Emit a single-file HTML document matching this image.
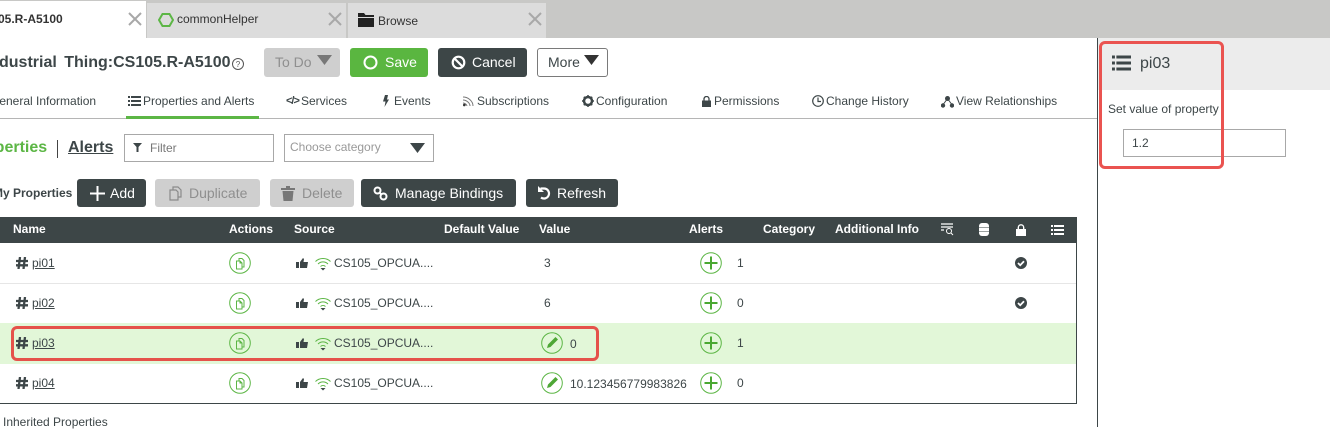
<!DOCTYPE html>
<html><head><meta charset="utf-8"><style>
html,body{margin:0;padding:0;background:#fff}
body{width:1330px;height:427px;overflow:hidden;position:relative;font-family:"Liberation Sans",sans-serif;color:#3d4648;font-size:12px}
.a,.t,.b,svg{position:absolute}
.t{white-space:nowrap;line-height:16px}
.b{border-radius:3px;box-sizing:border-box}
.d{background:#3d4647}.g{background:#cfcfcf}
.w{color:#fff}.m{color:#8f8f8f}
.h{font-weight:bold;color:#fff;top:221px}
u{text-underline-offset:1px}
</style></head><body>
<svg width="0" height="0" style="position:absolute"><defs>
<g id="copy"><circle cx="11" cy="11" r="10.3" fill="none" stroke="#5cb645" stroke-width="1"/><path d="M7.500 9h3.500l2 2v6H7.500zM11 9v2h2M10 9V6.500h3l2 2v6.500h-2" fill="none" stroke="#5cb645" stroke-width="1"/></g>
<g id="plus"><circle cx="11" cy="11" r="10.3" fill="none" stroke="#5cb645" stroke-width="1"/><path d="M4.500 11h13M11 4.500v13" stroke="#4aa832" stroke-width="2"/></g>
<g id="pen"><circle cx="11" cy="11" r="10.3" fill="none" stroke="#5cb645" stroke-width="1"/><path d="M6 16l1-3.500 7.500-7.500 2.500 2.500-7.500 7.500z" fill="#4ea736"/></g>
<g id="thumb"><path d="M0 4h3v6H0zM4 4l3-4 1 1-.5 3H12l-1 6H4z" fill="#3d4648"/></g>
<g id="wifi"><path d="M.5 4.500C4.500.5 11.500.5 15.500 4.500M3 7c3-2.800 7-2.800 10 0M5.500 9.500c1.500-1.300 3.500-1.300 5 0" fill="none" stroke="#5cb645" stroke-width="1"/><path d="M5.500 11h5L8 13.500z" fill="#3d4648"/></g>
<g id="hash"><path d="M4 0L2.500 12M9 0L7.500 12M0 4h12M0 8.300h12" stroke="#3d4648" stroke-width="2.300" fill="none"/></g>
<g id="chk"><circle cx="6" cy="6" r="6" fill="#3d4648"/><path d="M3 6l2.200 2.200L9 4.200" stroke="#fff" stroke-width="1.800" fill="none"/></g>
<g id="list"><path d="M0 1h2v2H0zM0 5h2v2H0zM0 9h2v2H0zM3 1h10v2H3zM3 5h10v2H3zM3 9h10v2H3z"/></g>
<g id="x"><path d="M1 1l12 12M13 1L1 13" stroke="#a8a8a8" stroke-width="2" fill="none"/></g>
</defs></svg>

<!-- tab strip -->
<div class="a" style="left:0;top:0;width:1330px;height:38px;background:#c8c8c6"></div>
<div class="a" style="left:0;top:1px;width:146px;height:37px;background:#fff"></div>
<div class="a" style="left:147px;top:3px;width:199px;height:35px;background:#dcdcdc"></div>
<div class="a" style="left:348px;top:3px;width:198px;height:35px;background:#dcdcdc"></div>
<div class="t" style="left:-2px;top:11px;color:#333;font-weight:bold">05.R-A5100</div>
<svg style="left:128px;top:12px" width="14" height="14"><use href="#x"/></svg>
<svg style="left:158px;top:12px" width="16" height="16"><path d="M4.500 2h7L15 8l-3.500 6h-7L1 8z" fill="none" stroke="#5cb645" stroke-width="2"/></svg>
<div class="t" style="left:177px;top:11px;color:#333">commonHelper</div>
<svg style="left:328px;top:12px" width="14" height="14"><use href="#x"/></svg>
<svg style="left:358px;top:13px" width="16" height="14"><path d="M0 0h6l1.500 2H16v2H0zM0 5h16v9H0z" fill="#222"/></svg>
<div class="t" style="left:378px;top:13px;color:#333">Browse</div>
<svg style="left:528px;top:12px" width="14" height="14"><use href="#x"/></svg>

<!-- title row -->
<div class="t" style="left:-1px;top:54px;font-size:16px;line-height:18px;font-weight:bold;color:#3d4648;word-spacing:3px">dustrial Thing:CS105.R-A5100</div>
<svg style="left:232px;top:58px" width="12" height="12"><circle cx="6" cy="6" r="5.500" fill="none" stroke="#555"/><text x="6" y="9" font-size="8" text-anchor="middle" fill="#555" font-family="Liberation Sans">?</text></svg>
<div class="b g" style="left:264px;top:48px;width:76px;height:29px"></div>
<div class="t m" style="left:275px;top:54px;font-size:14px">To Do</div>
<svg style="left:317px;top:55px" width="16" height="11"><path d="M0 0h15L7.500 10z" fill="#777"/></svg>
<div class="b" style="left:350px;top:48px;width:78px;height:29px;background:#5ab640"></div>
<svg style="left:363px;top:55px" width="15" height="15"><circle cx="7.500" cy="7.500" r="6" fill="none" stroke="#fff" stroke-width="2"/></svg>
<div class="t w" style="left:385px;top:54px;font-size:14px">Save</div>
<div class="b d" style="left:438px;top:48px;width:89px;height:29px"></div>
<svg style="left:451px;top:55px" width="15" height="15"><circle cx="7.500" cy="7.500" r="5.800" fill="none" stroke="#fff" stroke-width="2.200"/><path d="M3.500 3.500l8 8" stroke="#fff" stroke-width="2.200"/></svg>
<div class="t w" style="left:472px;top:54px;font-size:14px">Cancel</div>
<div class="b" style="left:537px;top:48px;width:71px;height:29px;border:1px solid #7a7a7a"></div>
<div class="t" style="left:548px;top:54px;font-size:14px">More</div>
<svg style="left:584px;top:55px" width="16" height="11"><path d="M0 0h15L7.500 10z" fill="#333"/></svg>

<!-- nav -->
<div class="a" style="left:0;top:118px;width:1097px;height:1px;background:#b5b5b5"></div>
<div class="a" style="left:126px;top:116px;width:133px;height:3px;background:#5cb645"></div>
<div class="t" style="left:-10px;top:93px">General Information</div>
<svg style="left:128px;top:95px" width="13" height="12" fill="#3d4648"><use href="#list"/></svg>
<div class="t" style="left:143px;top:93px">Properties and Alerts</div>
<div class="t" style="left:286px;top:93px;font-size:11px;font-weight:bold;letter-spacing:-1px">&lt;/&gt;</div>
<div class="t" style="left:301px;top:93px">Services</div>
<svg style="left:382px;top:95px" width="7" height="13"><path d="M3 0h3L5 4.500h2L2.500 12 3.500 6.500H1z" fill="#3d4648"/></svg>
<div class="t" style="left:394px;top:93px">Events</div>
<svg style="left:463px;top:94px" width="12" height="13"><path d="M0 3c5 0 10 4 10 9M0 6c3.500 0 7 3 7 6M0 9c1.500 0 4 1.500 4 3" fill="none" stroke="#777"/><circle cx="1.300" cy="11" r="1.300" fill="#333"/></svg>
<div class="t" style="left:477px;top:93px">Subscriptions</div>
<svg style="left:582px;top:95px" width="12" height="12"><circle cx="6" cy="6" r="4" fill="none" stroke="#3d4648" stroke-width="2.500"/><path d="M6 0v2M6 10v2M0 6h2M10 6h2M1.800 1.800l1.400 1.400M8.800 8.800l1.400 1.400M10.200 1.800L8.800 3.200M3.200 8.800l-1.400 1.400" stroke="#3d4648" stroke-width="1.500"/></svg>
<div class="t" style="left:596px;top:93px">Configuration</div>
<svg style="left:702px;top:96px" width="9" height="11"><path d="M0 4.500h9V11H0z" fill="#3d4648"/><path d="M2 4.500V3a2.500 2.500 0 0 1 5 0v1.500" fill="none" stroke="#3d4648" stroke-width="1.300"/></svg>
<div class="t" style="left:714px;top:93px">Permissions</div>
<svg style="left:812px;top:95px" width="12" height="12"><circle cx="6" cy="6" r="5.300" fill="none" stroke="#3d4648" stroke-width="1.200"/><path d="M6 2.500V6.500H9" fill="none" stroke="#3d4648" stroke-width="1.200"/></svg>
<div class="t" style="left:826px;top:93px">Change History</div>
<svg style="left:941px;top:96px" width="13" height="12"><circle cx="6.500" cy="2.500" r="2.500" fill="#3d4648"/><circle cx="2" cy="9.500" r="2.200" fill="#3d4648"/><circle cx="11" cy="9.500" r="2.200" fill="#3d4648"/><path d="M5.500 4L2.500 8M7.500 4l3 4" stroke="#3d4648"/></svg>
<div class="t" style="left:956px;top:93px">View Relationships</div>

<!-- filter row -->
<div class="t" style="left:-32px;top:138px;font-size:16px;line-height:19px;font-weight:bold;color:#5cb645">Properties</div>
<div class="a" style="left:57px;top:140px;width:1px;height:18px;background:#444"></div>
<div class="t" style="left:68px;top:138px;font-size:16px;line-height:19px;font-weight:bold"><u>Alerts</u></div>
<div class="b" style="left:124px;top:134px;width:150px;height:28px;border:1px solid #a8a8a8;border-radius:0"></div>
<svg style="left:133px;top:143px" width="9" height="9"><path d="M0 0h9L5.500 4v5H3.500V4z" fill="#3d4648"/></svg>
<div class="t" style="left:150px;top:140px;color:#777">Filter</div>
<div class="b" style="left:284px;top:134px;width:150px;height:28px;border:1px solid #a8a8a8;border-radius:0"></div>
<div class="t" style="left:290px;top:139px;color:#999">Choose category</div>
<svg style="left:410px;top:143px" width="16" height="11"><path d="M0 0h15L7.500 10z" fill="#3d4648"/></svg>

<!-- toolbar -->
<div class="t" style="left:-7px;top:185px;font-weight:bold">My Properties</div>
<div class="b d" style="left:77px;top:179px;width:69px;height:28px"></div>
<svg style="left:90px;top:186px" width="15" height="15"><path d="M0 7.500h15M7.500 0v15" stroke="#fff" stroke-width="2"/></svg>
<div class="t w" style="left:110px;top:185px;font-size:14px">Add</div>
<div class="b g" style="left:155px;top:179px;width:105px;height:28px"></div>
<svg style="left:169px;top:186px" width="13" height="15"><path d="M1 4h6l2 2v8H1zM4 4V1h5l3 3v7H9" fill="none" stroke="#8a8a8a" stroke-width="1.200"/></svg>
<div class="t m" style="left:189px;top:185px;font-size:14px">Duplicate</div>
<div class="b g" style="left:270px;top:179px;width:84px;height:28px"></div>
<svg style="left:281px;top:186px" width="14" height="15"><path d="M0 2h14v2H0zM5 0h4v2H5zM1.500 5h11l-1 10h-9z" fill="#777"/></svg>
<div class="t m" style="left:302px;top:185px;font-size:14px">Delete</div>
<div class="b d" style="left:361px;top:179px;width:155px;height:28px"></div>
<svg style="left:373px;top:186px" width="15" height="15"><circle cx="4.500" cy="4.500" r="3" fill="none" stroke="#fff" stroke-width="2"/><circle cx="10.500" cy="10.500" r="3" fill="none" stroke="#fff" stroke-width="2"/><path d="M6 6l3 3" stroke="#fff" stroke-width="2"/></svg>
<div class="t w" style="left:395px;top:185px;font-size:14px">Manage Bindings</div>
<div class="b d" style="left:526px;top:179px;width:92px;height:28px"></div>
<svg style="left:537px;top:186px" width="15" height="15"><path d="M3.500 2.500H7a5 5 0 1 1-3 9" fill="none" stroke="#fff" stroke-width="2.200"/><path d="M1 0v6h6z" fill="#fff"/></svg>
<div class="t w" style="left:557px;top:185px;font-size:14px">Refresh</div>

<!-- table -->
<div class="a d" style="left:0;top:217px;width:1077px;height:26px"></div>
<div class="t h" style="left:13px">Name</div>
<div class="t h" style="left:229px">Actions</div>
<div class="t h" style="left:294px">Source</div>
<div class="t h" style="left:444px">Default Value</div>
<div class="t h" style="left:539px">Value</div>
<div class="t h" style="left:689px">Alerts</div>
<div class="t h" style="left:763px">Category</div>
<div class="t h" style="left:835px">Additional Info</div>
<svg style="left:941px;top:223px" width="13" height="13"><path d="M0 1h12M0 4h12M0 7h3" stroke="#fff" stroke-width="1.200"/><circle cx="8" cy="8" r="2.500" fill="none" stroke="#fff"/><path d="M10 10l2 2" stroke="#fff"/></svg>
<svg style="left:979px;top:223px" width="10" height="13"><rect width="10" height="13" rx="3" fill="#fff"/><path d="M0 4.500h10M0 8.500h10" stroke="#9aa0a0"/></svg>
<svg style="left:1016px;top:224px" width="10" height="12"><path d="M0 5h10v7H0z" fill="#fff"/><path d="M2.300 5V3.500a2.700 2.700 0 0 1 5.400 0V5" fill="none" stroke="#fff" stroke-width="1.400"/></svg>
<svg style="left:1051px;top:224px" width="13" height="12" fill="#fff"><use href="#list"/></svg>

<div class="a" style="left:0;top:283px;width:1077px;height:1px;background:#e6e6e6"></div>
<div class="a" style="left:0;top:323px;width:1077px;height:41px;background:#e2f7d8"></div>
<div class="a" style="left:0;top:403px;width:1077px;height:1px;background:#3d4648"></div>
<div class="a" style="left:1076px;top:243px;width:1px;height:161px;background:#3d4648"></div>

<!-- row 1 -->
<svg style="left:16px;top:257px" width="12" height="12"><use href="#hash"/></svg>
<div class="t" style="left:32px;top:255px"><u>pi01</u></div>
<svg style="left:229px;top:252px" width="22" height="22"><use href="#copy"/></svg>
<svg style="left:296px;top:258px" width="12" height="10"><use href="#thumb"/></svg>
<svg style="left:315px;top:257px" width="16" height="14"><use href="#wifi"/></svg>
<div class="t" style="left:334px;top:255px">CS105_OPCUA....</div>
<div class="t" style="left:544px;top:255px">3</div>
<svg style="left:700px;top:252px" width="22" height="22"><use href="#plus"/></svg>
<div class="t" style="left:737px;top:255px">1</div>
<svg style="left:1015px;top:257px" width="12" height="12"><use href="#chk"/></svg>

<!-- row 2 -->
<svg style="left:16px;top:297px" width="12" height="12"><use href="#hash"/></svg>
<div class="t" style="left:32px;top:295px"><u>pi02</u></div>
<svg style="left:229px;top:292px" width="22" height="22"><use href="#copy"/></svg>
<svg style="left:296px;top:298px" width="12" height="10"><use href="#thumb"/></svg>
<svg style="left:315px;top:297px" width="16" height="14"><use href="#wifi"/></svg>
<div class="t" style="left:334px;top:295px">CS105_OPCUA....</div>
<div class="t" style="left:544px;top:295px">6</div>
<svg style="left:700px;top:292px" width="22" height="22"><use href="#plus"/></svg>
<div class="t" style="left:737px;top:295px">0</div>
<svg style="left:1015px;top:297px" width="12" height="12"><use href="#chk"/></svg>

<!-- row 3 -->
<svg style="left:16px;top:337px" width="12" height="12"><use href="#hash"/></svg>
<div class="t" style="left:32px;top:335px"><u>pi03</u></div>
<svg style="left:229px;top:332px" width="22" height="22"><use href="#copy"/></svg>
<svg style="left:296px;top:338px" width="12" height="10"><use href="#thumb"/></svg>
<svg style="left:315px;top:337px" width="16" height="14"><use href="#wifi"/></svg>
<div class="t" style="left:334px;top:335px">CS105_OPCUA....</div>
<svg style="left:541px;top:332px" width="22" height="22"><use href="#pen"/></svg>
<div class="t" style="left:570px;top:336px">0</div>
<svg style="left:700px;top:332px" width="22" height="22"><use href="#plus"/></svg>
<div class="t" style="left:737px;top:335px">1</div>

<!-- row 4 -->
<svg style="left:16px;top:377px" width="12" height="12"><use href="#hash"/></svg>
<div class="t" style="left:32px;top:375px"><u>pi04</u></div>
<svg style="left:229px;top:372px" width="22" height="22"><use href="#copy"/></svg>
<svg style="left:296px;top:378px" width="12" height="10"><use href="#thumb"/></svg>
<svg style="left:315px;top:377px" width="16" height="14"><use href="#wifi"/></svg>
<div class="t" style="left:334px;top:375px">CS105_OPCUA....</div>
<svg style="left:541px;top:372px" width="22" height="22"><use href="#pen"/></svg>
<div class="t" style="left:570px;top:376px">10.123456779983826</div>
<svg style="left:700px;top:372px" width="22" height="22"><use href="#plus"/></svg>
<div class="t" style="left:737px;top:375px">0</div>

<div class="t" style="left:3px;top:414px">Inherited Properties</div>

<!-- side panel -->
<div class="a" style="left:1097px;top:38px;width:1px;height:389px;background:#3d4648"></div>
<div class="a" style="left:1098px;top:38px;width:232px;height:52px;background:#ececec"></div>
<svg style="left:1112px;top:54px" width="19" height="18" viewBox="0 0 13 12" preserveAspectRatio="none" fill="#3d4648"><use href="#list"/></svg>
<div class="t" style="left:1140px;top:55px;font-size:16px;line-height:18px">pi03</div>
<div class="t" style="left:1108px;top:101px">Set value of property</div>
<div class="b" style="left:1123px;top:129px;width:163px;height:28px;border:1px solid #a8a8a8;border-radius:0"></div>
<div class="t" style="left:1132px;top:135px">1.2</div>

<!-- annotations -->
<div class="a" style="left:1099px;top:41px;width:125px;height:128px;box-sizing:border-box;border:3px solid #ea5350;border-radius:6px"></div>
<div class="a" style="left:11px;top:326px;width:588px;height:35px;box-sizing:border-box;border:3px solid #e5524a;border-radius:6px"></div>
</body></html>
